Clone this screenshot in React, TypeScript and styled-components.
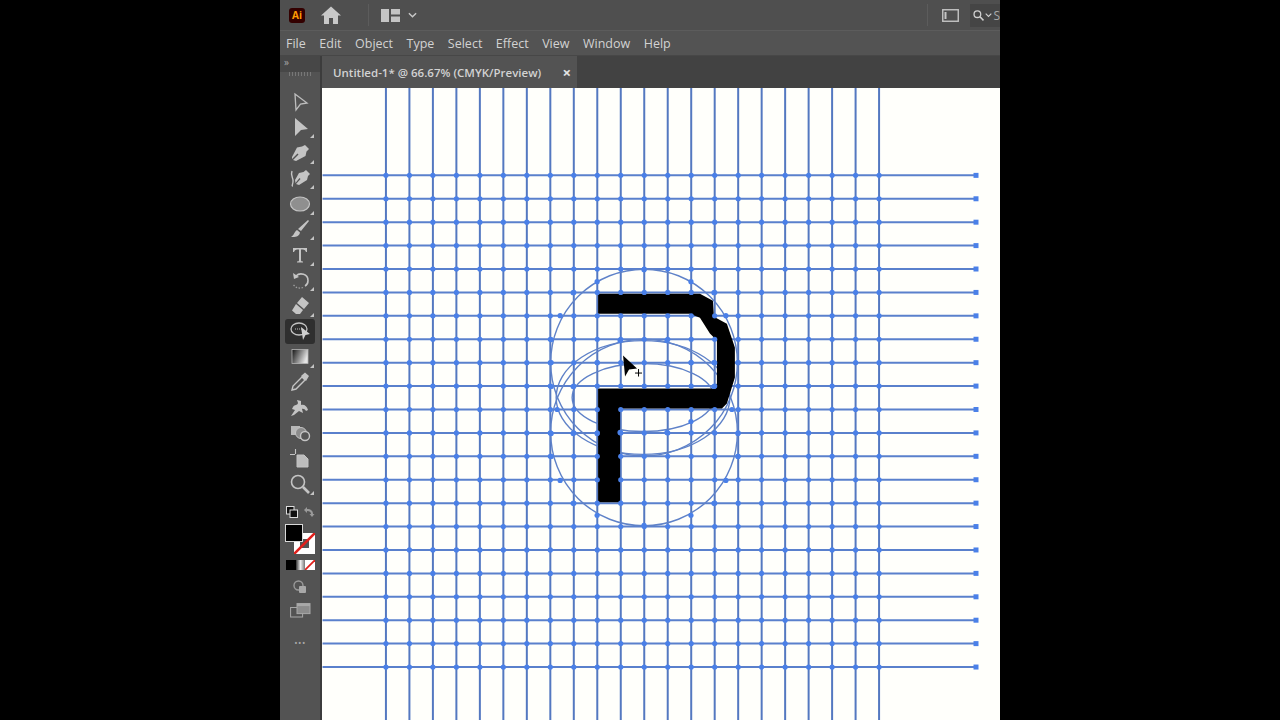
import React from "react";
import styled, { createGlobalStyle } from "styled-components";

const GlobalStyle = createGlobalStyle`
  html, body { margin: 0; padding: 0; background: #000; overflow: hidden; }
  #root { height: 720px; }
`;

const xs = Array.from({ length: 22 }, (_, i) => 385.5 + i * 23.52);
const ys = Array.from({ length: 22 }, (_, i) => 174.5 + i * 23.45);

const menuItems = ["File", "Edit", "Object", "Type", "Select", "Effect", "View", "Window", "Help"];

const circleAnchors = [
  [644, 269], [597, 281], [573, 292], [560, 315], [551, 339], [551, 362], [551, 386], [557, 409], [573, 386],
  [597, 362], [620, 340], [667, 340], [691, 362], [714, 386], [732, 409], [738, 433], [738, 456], [726, 480],
  [714, 503], [691, 515], [644, 525], [597, 515], [573, 503], [560, 480], [551, 456], [551, 433], [573, 433],
  [597, 433], [620, 432], [667, 432], [691, 421], [714, 362], [738, 362], [726, 315], [714, 292], [691, 281],
];

const tools: { key: string; corner?: boolean; active?: boolean; icon: React.ReactNode }[] = [
  { key: "select", icon: <path d="M7 4 L19 13 L12.5 14 L8 20 Z" fill="none" stroke="#bdbdbd" strokeWidth="1.3" /> },
  { key: "direct", corner: true, icon: <path d="M7 3 L20 14 L13 15 L7 21 Z" /> },
  { key: "pen", corner: true, icon: <path d="M17 4 L21 8 L18.5 10.5 L17.5 15 L8 20 L5 19 L10.5 13.5 L9.5 12.5 L4 18 L4 16 L9 6.5 L14 5.5 Z" /> },
  {
    key: "curvature",
    corner: true,
    icon: (
      <>
        <path d="M18 4 L22 8 L20 10 L19 14 L11 19 L8 18 L12.5 13 L11.5 12 L7.5 17 L7 14 L11 7 L15.5 6 Z" />
        <path d="M4 5 C2 10 6 12 5 16 C4.5 19 3.5 20 5 20" fill="none" stroke="#c4c4c4" strokeWidth="1.4" />
      </>
    ),
  },
  { key: "ellipse", corner: true, icon: <ellipse cx="12" cy="12" rx="9.5" ry="7" fill="#8f8f8f" stroke="#c4c4c4" strokeWidth="1.2" /> },
  { key: "brush", corner: true, icon: <path d="M20 3 L21 4 L13 14 L10 12 Z M9 13 L12 15.5 C11.5 19 8 20.5 3 20 C6 18.5 6 15 9 13 Z" /> },
  { key: "type", corner: true, icon: <path d="M5 5 H19 V9 H18 Q17.5 6.5 15 6.5 H13 V17.5 Q13 18.5 15 18.5 V19.5 H9 V18.5 Q11 18.5 11 17.5 V6.5 H9 Q6.5 6.5 6 9 H5 Z" /> },
  {
    key: "rotate",
    corner: true,
    icon: (
      <>
        <path d="M8 8 C12 4 20 6 20 12.5 C20 15 19 17 17 18" fill="none" stroke="#c4c4c4" strokeWidth="1.6" />
        <path d="M5 5 L6 11 L11 9 Z" />
        <path d="M15 19.5 C11 21 7 19.5 5 16" fill="none" stroke="#a0a0a0" strokeWidth="1.2" strokeDasharray="1.5 1.5" />
      </>
    ),
  },
  { key: "eraser", corner: true, icon: <path d="M14 3 L21 9 L16 15 L9 9 Z M8 10 L15 16 L12 20 L8 20 L4 16.5 Z" /> },
  {
    key: "shape-builder",
    active: true,
    icon: (
      <>
        <ellipse cx="11" cy="10" rx="8" ry="6" fill="none" stroke="#c4c4c4" strokeWidth="1.3" />
        <path d="M7 10 H14" stroke="#c4c4c4" strokeWidth="1.2" strokeDasharray="1 1" />
        <path d="M13 8 L22 15 L17.5 16 L15 21 Z" fill="#d0d0d0" />
      </>
    ),
  },
  {
    key: "gradient",
    corner: true,
    icon: (
      <>
        <defs>
          <linearGradient id="toolGradient" x1="0" x2="1" y1="0" y2="0.4">
            <stop offset="0" stopColor="#111" />
            <stop offset="1" stopColor="#e4e4e4" />
          </linearGradient>
        </defs>
        <rect x="4" y="4.5" width="16" height="14" fill="url(#toolGradient)" stroke="#b5b5b5" strokeWidth="0.8" />
      </>
    ),
  },
  {
    key: "eyedropper",
    icon: (
      <>
        <path d="M4 20 L5 16 L14 7 L17 10 L8 19 Z" fill="none" stroke="#c4c4c4" strokeWidth="1.4" />
        <path d="M13 6 L17 2.5 L21 6 L18 11 Z" />
      </>
    ),
  },
  { key: "blend", icon: <path d="M5 11 C7 8 9 10 10 7 L9 4 L13 5 L13 9 C16 8 19 10 20 14 L18 15 C17 13 15 12.5 14 13 L15 17 L11 15 L6 19 L3 20 L7 14 L4 13 Z" /> },
  {
    key: "graph",
    icon: (
      <>
        <rect x="3" y="5" width="9" height="9" fill="#b8b8b8" />
        <circle cx="13" cy="12" r="5.5" fill="#8c8c8c" stroke="#c4c4c4" strokeWidth="1" />
        <circle cx="17" cy="15" r="4.5" fill="#555" stroke="#c4c4c4" strokeWidth="1.4" />
      </>
    ),
  },
  {
    key: "artboard",
    icon: (
      <>
        <path d="M9 8 H16 L20 12 V20 H9 Z" fill="#bdbdbd" stroke="#c4c4c4" strokeWidth="1" />
        <path d="M2 7.5 H7 M7.5 2 V7" stroke="#c4c4c4" strokeWidth="1.1" fill="none" />
      </>
    ),
  },
  {
    key: "zoom",
    corner: true,
    icon: (
      <>
        <circle cx="10" cy="10" r="6.5" fill="none" stroke="#c4c4c4" strokeWidth="1.6" />
        <path d="M15 15 L21 21" stroke="#c4c4c4" strokeWidth="2.6" />
      </>
    ),
  },
];

export default function App() {
  return (
    <>
      <GlobalStyle />
      <Page>
        <Window>
          <TopBar>
            <AiLogo>Ai</AiLogo>
            <HomeIcon viewBox="0 0 20 18">
              <path d="M10 0.5 L20 9.5 H17 V18 H12 V12 H8 V18 H3 V9.5 H0 Z" />
            </HomeIcon>
            <BarDivider />
            <LayoutIcon viewBox="0 0 19 13">
              <path d="M0 0 H8 V13 H0 Z M10 0 H19 V5.5 H10 Z M10 7.5 H19 V13 H10 Z" />
            </LayoutIcon>
            <Chevron viewBox="0 0 10 6">
              <path d="M1 1 L5 5 L9 1" fill="none" stroke="#c8c8c8" strokeWidth="1.6" />
            </Chevron>
            <Spacer />
            <BarDivider />
            <PanelIcon viewBox="0 0 17 13">
              <rect x="0.75" y="0.75" width="15.5" height="11.5" fill="none" stroke="#c4c4c4" strokeWidth="1.4" />
              <rect x="2.5" y="3" width="2" height="7" fill="#c4c4c4" />
            </PanelIcon>
            <SearchBox>
              <svg width="13" height="13" viewBox="0 0 13 13">
                <circle cx="5" cy="5" r="3.8" fill="none" stroke="#d0d0d0" strokeWidth="1.5" />
                <path d="M8 8 L12 12" stroke="#d0d0d0" strokeWidth="1.8" />
              </svg>
              <svg width="8" height="6" viewBox="0 0 10 6">
                <path d="M1 1 L5 5 L9 1" fill="none" stroke="#d0d0d0" strokeWidth="1.6" />
              </svg>
              <SearchText>S</SearchText>
            </SearchBox>
          </TopBar>
          <MenuBar>
            {menuItems.map((item) => (
              <MenuItem key={item}>{item}</MenuItem>
            ))}
          </MenuBar>
          <Workspace>
            <Toolbar>
              <ToolbarHead>
                <Collapse>»</Collapse>
                <Grip />
              </ToolbarHead>
              <ToolList>
                {tools.map((tool) => (
                  <Tool key={tool.key} $active={tool.active} $corner={tool.corner}>
                    <svg width="24" height="24" viewBox="0 0 24 24" fill="#c4c4c4">
                      {tool.icon}
                    </svg>
                  </Tool>
                ))}
              </ToolList>
              <SwapRow>
                <svg width="12" height="12" viewBox="0 0 12 12">
                  <rect x="0.5" y="0.5" width="7.5" height="7.5" fill="#111" stroke="#ddd" />
                  <rect x="4" y="4" width="7.5" height="7.5" fill="#111" stroke="#ddd" />
                </svg>
                <svg width="12" height="12" viewBox="0 0 12 12">
                  <path d="M1 4 L4 1 L4 3 C8 3 10 5 10 8 H11.5 L9 11 L6.5 8 H8 C8 6 6.5 5 4 5 V7 Z" fill="#9a9a9a" />
                </svg>
              </SwapRow>
              <FillStroke>
                <StrokeSwatch>
                  <svg width="21" height="21" viewBox="0 0 21 21">
                    <rect width="21" height="21" fill="#fff" />
                    <rect x="6" y="6" width="9" height="9" fill="#535353" />
                    <path d="M0 21 L21 0" stroke="#e0201c" strokeWidth="2.6" />
                  </svg>
                </StrokeSwatch>
                <FillSwatch />
              </FillStroke>
              <ColorModes>
                <ModeBlack />
                <ModeGradient />
                <ModeNone>
                  <svg width="10" height="10" viewBox="0 0 10 10">
                    <rect width="10" height="10" fill="#fff" />
                    <path d="M0 10 L10 0" stroke="#e0201c" strokeWidth="1.8" />
                  </svg>
                </ModeNone>
              </ColorModes>
              <BottomIcon $top={10}>
                <svg width="14" height="14" viewBox="0 0 14 14">
                  <circle cx="5.5" cy="5.5" r="4.5" fill="none" stroke="#9a9a9a" strokeWidth="1.4" />
                  <rect x="6" y="6" width="7" height="7" rx="1" fill="#a8a8a8" />
                </svg>
              </BottomIcon>
              <BottomIcon $top={9}>
                <svg width="21" height="15" viewBox="0 0 21 15">
                  <rect x="0.6" y="4.5" width="12" height="9.5" fill="#535353" stroke="#a8a8a8" />
                  <rect x="7" y="0.6" width="13" height="10" fill="#8c8c8c" stroke="#a8a8a8" />
                  <rect x="7" y="0.6" width="13" height="2.5" fill="#a8a8a8" />
                </svg>
              </BottomIcon>
              <Dots>•••</Dots>
            </Toolbar>
            <Document>
              <TabRow>
                <Tab>
                  <TabTitle>Untitled-1* @ 66.67% (CMYK/Preview)</TabTitle>
                  <TabClose>×</TabClose>
                </Tab>
              </TabRow>
              <Canvas viewBox="322 87 678 633">
                {xs.map((x) => (
                  <VerticalGuide key={x} x1={x} x2={x} y1={87} y2={720} />
                ))}
                {ys.map((y) => (
                  <HorizontalGuide key={y} x1={322} x2={977} y1={y} y2={y} />
                ))}
                <ShapeOutline cx={644} cy={362} rx={93.5} ry={93.5} />
                <ShapeOutline cx={644} cy={432} rx={93.5} ry={93.5} />
                <ShapeOutline cx={643} cy={397} rx={87} ry={57} />
                <ShapeOutline cx={643} cy={397} rx={71} ry={34} />
                <path
                  d="M598 293 H700 L713 300 L714 316 L727 323 L735 347 L735 377 L727 403 L722 408 L620 408 V502 H598 V388 L713 388 L717 383 V340 L710 333 L700 317 L690 313 H598 Z"
                  fill="#000"
                />
                {xs.flatMap((x) =>
                  ys.map((y) => <Anchor key={`${x}-${y}`} cx={x} cy={y} r={2.6} />)
                )}
                {circleAnchors.map(([x, y]) => (
                  <Anchor key={`c-${x}-${y}`} cx={x} cy={y} r={2.6} />
                ))}
                {ys.map((y) => (
                  <EndPoint key={y} x={974} y={y - 2.5} width={5} height={5} />
                ))}
                <path d="M623 355 L637 368 L629 369 L625 376 Z" fill="#000" />
                <path d="M638.5 368.5 V376 M635 372.5 H642" stroke="#000" strokeWidth="1" />
              </Canvas>
            </Document>
          </Workspace>
        </Window>
      </Page>
    </>
  );
}

const Page = styled.div`
  display: flex;
  justify-content: center;
  height: 720px;
  background: #000;
  font-family: "Open Sans", "Noto Sans", sans-serif;
`;

const Window = styled.div`
  display: flex;
  flex-direction: column;
  width: 720px;
  height: 720px;
  overflow: hidden;
  background: #535353;
`;

const TopBar = styled.div`
  display: flex;
  align-items: center;
  height: 31px;
  flex: none;
  padding-left: 9px;
  background: #4f4f4f;
  border-bottom: 1px solid #5c5c5c;
  box-sizing: border-box;
`;

const AiLogo = styled.div`
  width: 16px;
  height: 15px;
  border-radius: 3px;
  background: #330000;
  color: #ff9a00;
  font-size: 10px;
  font-weight: 700;
  line-height: 15px;
  text-align: center;
`;

const HomeIcon = styled.svg`
  width: 20px;
  height: 18px;
  margin-left: 16px;
  fill: #c8c8c8;
`;

const BarDivider = styled.div`
  width: 1px;
  height: 22px;
  margin-left: 27px;
  background: #5c5c5c;
`;

const LayoutIcon = styled.svg`
  width: 19px;
  height: 13px;
  margin-left: 12px;
  fill: #c4c4c4;
`;

const Chevron = styled.svg`
  width: 9px;
  height: 6px;
  margin-left: 8px;
`;

const Spacer = styled.div`
  flex: 1;
`;

const PanelIcon = styled.svg`
  width: 17px;
  height: 13px;
  margin-left: 14px;
`;

const SearchBox = styled.div`
  display: flex;
  align-items: center;
  gap: 1px;
  width: 30px;
  height: 23px;
  margin-left: 11px;
  padding-left: 3px;
  background: #454545;
  box-sizing: border-box;
  overflow: hidden;
  flex: none;
`;

const SearchText = styled.span`
  color: #a8a8a8;
  font-size: 12px;
`;

const MenuBar = styled.div`
  display: flex;
  align-items: center;
  gap: 13.5px;
  height: 24px;
  flex: none;
  padding-left: 6px;
  background: #535353;
  border-bottom: 1px solid #474747;
`;

const MenuItem = styled.span`
  color: #d2d2d2;
  font-size: 12.5px;
`;

const Workspace = styled.div`
  display: flex;
  flex: 1;
  min-height: 0;
`;

const Toolbar = styled.div`
  display: flex;
  flex-direction: column;
  align-items: center;
  width: 40px;
  flex: none;
  background: #535353;
  border-right: 2px solid #3c3c3c;
`;

const ToolbarHead = styled.div`
  display: flex;
  flex-direction: column;
  align-self: stretch;
  height: 33px;
  background: #4a4a4a;
  background: linear-gradient(#474747 0 16px, #535353 16px);
`;

const Collapse = styled.span`
  color: #a8a8a8;
  font-size: 10px;
  line-height: 13px;
  padding-left: 4px;
`;

const Grip = styled.div`
  width: 22px;
  height: 4px;
  margin: 3px auto 0;
  background: repeating-linear-gradient(90deg, #777 0 1px, transparent 1px 3px);
`;

const ToolList = styled.div`
  display: flex;
  flex-direction: column;
  align-items: center;
  width: 100%;
`;

const Tool = styled.div<{ $active?: boolean; $corner?: boolean }>`
  position: relative;
  display: flex;
  align-items: center;
  justify-content: center;
  width: 30px;
  height: 25.5px;
  border-radius: 3px;
  background: ${(p) => (p.$active ? "#2f2f2f" : "transparent")};

  &::after {
    content: "";
    display: ${(p) => (p.$corner ? "block" : "none")};
    position: absolute;
    right: 1px;
    bottom: 2px;
    border-style: solid;
    border-width: 0 0 4px 4px;
    border-color: transparent transparent #c4c4c4 transparent;
  }
`;

const SwapRow = styled.div`
  display: flex;
  justify-content: space-between;
  width: 29px;
  margin-top: 9px;
`;

const FillStroke = styled.div`
  position: relative;
  width: 30px;
  height: 30px;
  margin-top: 6px;
`;

const FillSwatch = styled.div`
  position: absolute;
  left: 0;
  top: 0;
  width: 16px;
  height: 16px;
  background: #000;
  border: 1px solid #d8d8d8;
`;

const StrokeSwatch = styled.div`
  position: absolute;
  right: 0;
  bottom: 0;
  width: 21px;
  height: 21px;
`;

const ColorModes = styled.div`
  display: flex;
  width: 29px;
  height: 10px;
  margin-top: 6px;
`;

const ModeBlack = styled.div`
  width: 10px;
  background: #000;
`;

const ModeGradient = styled.div`
  width: 9px;
  background: linear-gradient(90deg, #333, #eee, #777);
`;

const ModeNone = styled.div`
  width: 10px;
  line-height: 0;
`;

const BottomIcon = styled.div<{ $top: number }>`
  margin-top: ${(p) => p.$top}px;
  line-height: 0;
`;

const Dots = styled.div`
  margin-top: 18px;
  color: #a8a8a8;
  font-size: 9px;
  letter-spacing: 0.5px;
`;

const Document = styled.div`
  display: flex;
  flex-direction: column;
  flex: 1;
  min-width: 0;
`;

const TabRow = styled.div`
  display: flex;
  height: 32px;
  flex: none;
  background: #424242;
`;

const Tab = styled.div`
  display: flex;
  align-items: center;
  justify-content: space-between;
  width: 255px;
  padding: 0 6px 0 11px;
  background: #535353;
  box-sizing: border-box;
`;

const TabTitle = styled.span`
  color: #d2d2d2;
  font-size: 11.5px;
  font-weight: 600;
  white-space: nowrap;
`;

const TabClose = styled.span`
  color: #e4e4e4;
  font-size: 15px;
  font-weight: 700;
`;

const Canvas = styled.svg`
  display: block;
  width: 678px;
  height: 633px;
  background: #fffffb;
`;

const VerticalGuide = styled.line`
  stroke: #5478c0;
  stroke-width: 2;
`;

const HorizontalGuide = styled.line`
  stroke: #5a80cc;
  stroke-width: 2;
`;

const ShapeOutline = styled.ellipse`
  fill: none;
  stroke: #5f82c8;
  stroke-width: 1.4;
`;

const Anchor = styled.circle`
  fill: #4a80e8;
`;

const EndPoint = styled.rect`
  fill: #4a80e8;
`;
